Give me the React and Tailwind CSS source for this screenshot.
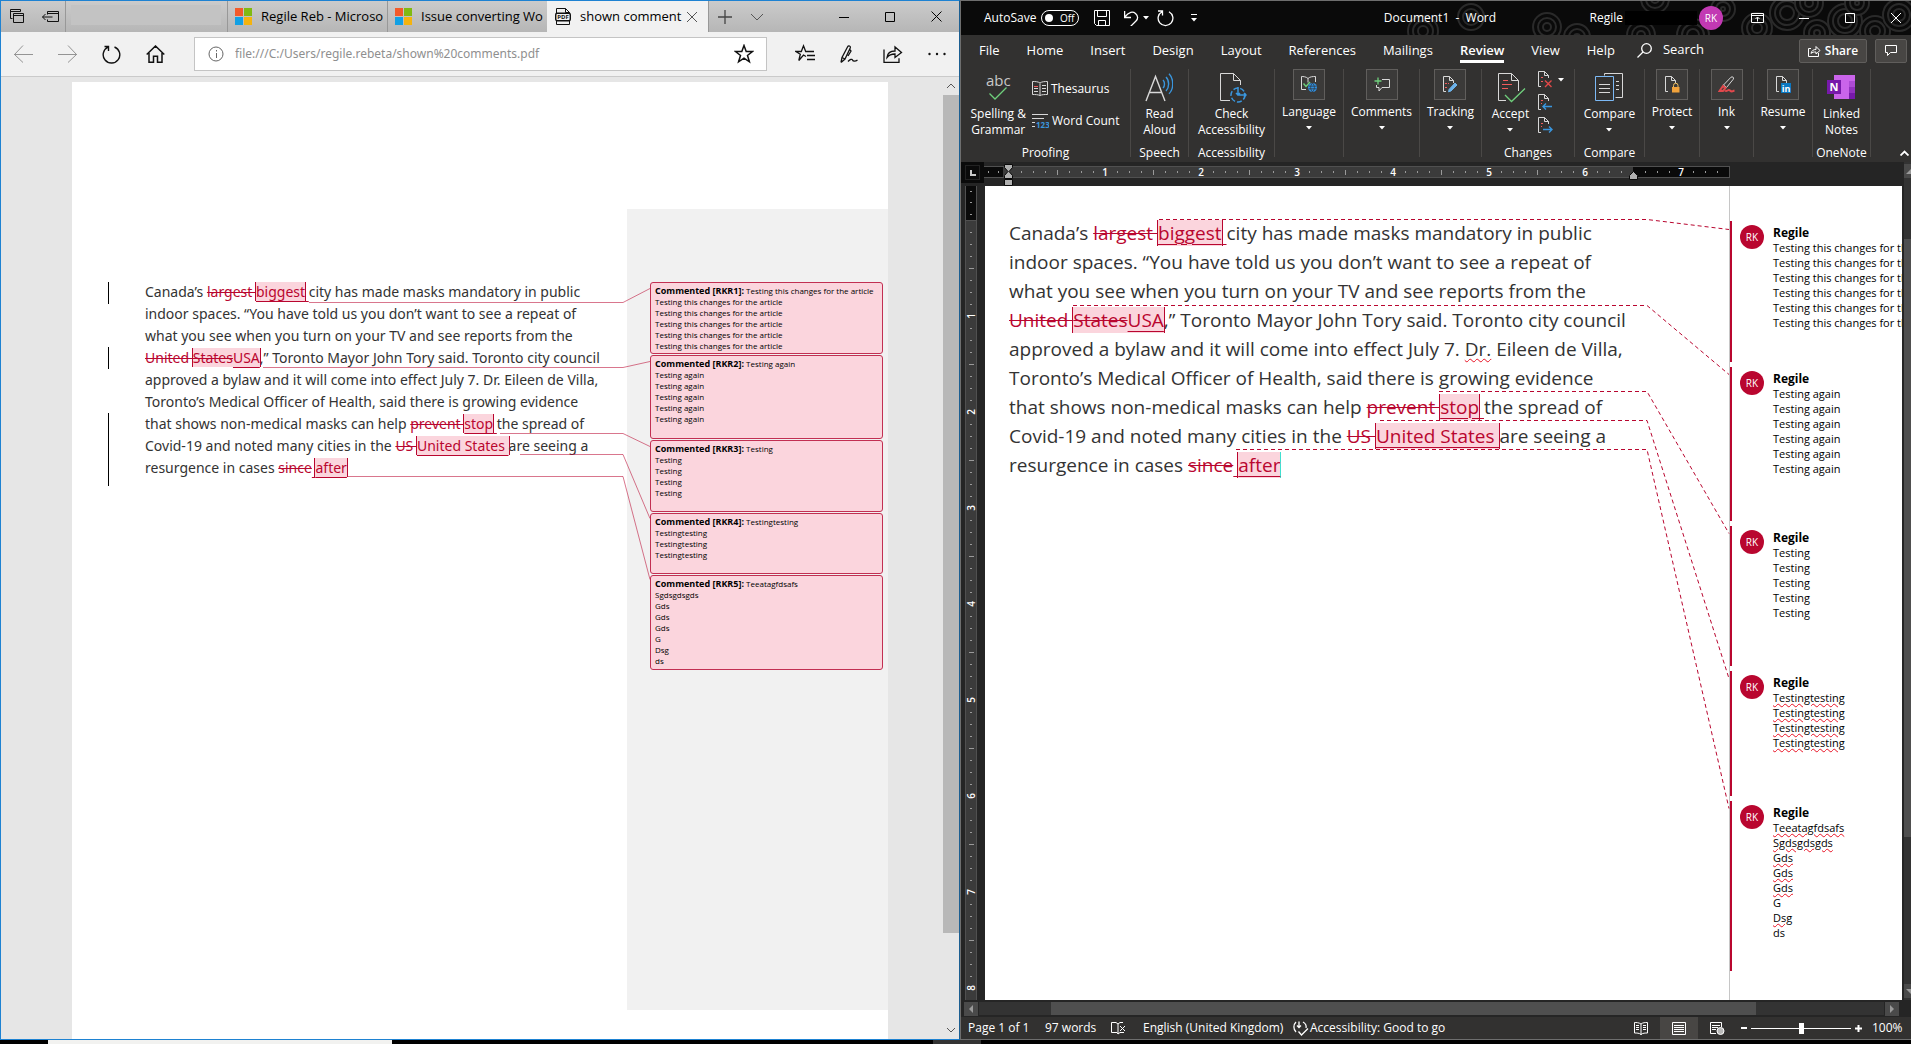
import React from "react";
import clsx from "clsx";

const articleLines = [
  <>
    Canada’s <Del>largest </Del>
    <Mark>
      <Ins>biggest</Ins>
    </Mark>
    <Ins> </Ins>city has made masks mandatory in public
  </>,
  <>indoor spaces. “You have told us you don’t want to see a repeat of</>,
  <>what you see when you turn on your TV and see reports from the</>,
  <>
    <Del>United </Del>
    <Mark>
      <Del>States</Del>
      <Ins>USA</Ins>
    </Mark>
    ,” Toronto Mayor John Tory said. Toronto city council
  </>,
  <>
    approved a bylaw and it will come into effect July 7.{" "}
    <span className="decoration-[#e81123] decoration-wavy decoration-1 underline-offset-2 group-data-[live=true]:underline">
      Dr.
    </span>{" "}
    Eileen de Villa,
  </>,
  <>Toronto’s Medical Officer of Health, said there is growing evidence</>,
  <>
    that shows non-medical masks can help <Del>prevent </Del>
    <Mark>
      <Ins>stop</Ins>
    </Mark>
    <Ins> </Ins>the spread of
  </>,
  <>
    Covid-19 and noted many cities in the <Del>US </Del>
    <Mark>
      <Ins>United States </Ins>
    </Mark>
    are seeing a
  </>,
  <>
    resurgence in cases <Del>since</Del>
    <Ins> </Ins>
    <Mark className="group-data-[live=true]:border-r-[#3fe0d0]">
      <Ins>after</Ins>
    </Mark>
  </>,
];

const pdfComments = [
  {
    id: "RKR1",
    first: "Testing this changes for the article",
    rest: Array(5).fill("Testing this changes for the article"),
    height: "min-h-[72px]",
  },
  {
    id: "RKR2",
    first: "Testing again",
    rest: Array(5).fill("Testing again"),
    height: "min-h-[84px]",
  },
  {
    id: "RKR3",
    first: "Testing",
    rest: Array(4).fill("Testing"),
    height: "min-h-[72px]",
  },
  {
    id: "RKR4",
    first: "Testingtesting",
    rest: Array(3).fill("Testingtesting"),
    height: "min-h-[61px]",
  },
  {
    id: "RKR5",
    first: "Teeatagfdsafs",
    rest: ["Sgdsgdsgds", "Gds", "Gds", "Gds", "G", "Dsg", "ds"],
    height: "min-h-[95px]",
  },
];

const wordComments = [
  {
    lines: Array(6).fill("Testing this changes for the article"),
    height: "min-h-[141px]",
  },
  { lines: Array(6).fill("Testing again"), height: "min-h-[154px]" },
  { lines: Array(5).fill("Testing"), height: "min-h-[140px]" },
  {
    lines: Array(4).fill("Testingtesting"),
    misspelled: true,
    height: "min-h-[125px]",
  },
  {
    lines: ["Teeatagfdsafs", "Sgdsgdsgds", "Gds", "Gds", "Gds", "G", "Dsg", "ds"],
    misspelled: true,
    height: "min-h-[170px]",
  },
];

const ribbonTabs = [
  "File",
  "Home",
  "Insert",
  "Design",
  "Layout",
  "References",
  "Mailings",
  "Review",
  "View",
  "Help",
];

// centre x, centre y and outer radius of each ring stack in the title bar
const rings = [
  [18, 30, 15],
  [66, 16, 13],
  [142, 26, 14],
  [172, 36, 13],
  [250, -2, 14],
  [236, 34, 14],
  [288, 34, 16],
  [318, 8, 12],
  [352, 27, 15],
  [382, 12, 17],
  [404, 2, 14],
  [412, 32, 13],
  [440, 20, 17],
  [452, 2, 12],
  [470, 30, 15],
  [494, 14, 16],
];

function Del({ children }) {
  return <del className="text-[#b9062f] decoration-1">{children}</del>;
}

function Ins({ children }) {
  return (
    <ins className="text-[#b9062f] decoration-1 underline-offset-4">
      {children}
    </ins>
  );
}

function Mark({ children, className }) {
  return (
    <mark className={clsx("-mx-px border-x border-[#b9062f] bg-[#fbd5dd]", className)}>
      {children}
    </mark>
  );
}

function Icon({ w = 16, h = w, children, className, ...rest }) {
  return (
    <svg
      width={w}
      height={h}
      viewBox={`0 0 ${w} ${h}`}
      fill="none"
      stroke="currentColor"
      className={clsx("shrink-0", className)}
      aria-hidden="true"
      {...rest}
    >
      {children}
    </svg>
  );
}

function Caret({ className }) {
  return (
    <Icon w={6} h={4} className={className}>
      <path d="M0 0h6L3 3.5z" fill="currentColor" stroke="none" />
    </Icon>
  );
}

/* ---------- Browser window ---------- */

function WindowsLogo() {
  return (
    <Icon w={17} stroke="none">
      <path fill="#f25a2a" d="M0 0h8v8H0z" />
      <path fill="#80ba12" d="M9 0h8v8H9z" />
      <path fill="#12a0e4" d="M0 9h8v8H0z" />
      <path fill="#f4b30e" d="M9 9h8v8H9z" />
    </Icon>
  );
}

function BrowserTabs() {
  return (
    <div className="flex h-[31px] bg-linear-to-b from-[#cbcbcb] to-[#b6b6b6] text-[13px]">
      <div className="flex w-[64px] flex-none items-center gap-[17px] pl-[9px]">
        <button aria-label="Tabs set aside">
          <Icon w={15} h={15} stroke="#111">
            <path d="M2.500 9.500h-2V.5h10v2" />
            <path d="M.5 2.500h10M3.500 4.500h10v9h-10zM3.500 6.500h10" />
          </Icon>
        </button>
        <button aria-label="Set these tabs aside">
          <Icon w={17} h={12} stroke="#111">
            <path d="M5.500 3.500v-3h11v10h-11v-2M5.500 2.500h11M.5 6h10M3.500 3L.5 6l3 3" />
          </Icon>
        </button>
      </div>
      <div className="w-[162px] flex-none border-l border-[#989898] p-1 pl-[5px]">
        <div className="h-5 w-[150px] bg-[#c3c3c3]" />
      </div>
      {["Regile Reb - Microso", "Issue converting Wo"].map((t) => (
        <button
          key={t}
          className="flex w-[160px] flex-none items-center gap-[9px] border-l border-[#989898] pl-[7px] whitespace-nowrap"
        >
          <WindowsLogo />
          {t}
        </button>
      ))}
      <div className="flex w-[162px] flex-none items-center border-r border-[#989898] bg-[#f1f1f1] pl-2">
        <Icon w={16} h={17} stroke="#111">
          <path d="M1.500 5V.5h9l4 4V5M1.500 13v3.500h13V13M10.500.5v4h4" />
          <rect x=".7" y="5.200" width="14.600" height="7.600" rx="1.500" strokeWidth="1.400" fill="#f1f1f1" />
          <text
            x="8"
            y="11.200"
            fontSize="6"
            fontWeight="700"
            textAnchor="middle"
            fill="#111"
            stroke="none"
          >
            PDF
          </text>
        </Icon>
        <button className="ml-[9px] text-left whitespace-nowrap">
          shown comment
        </button>
        <button aria-label="Close tab" className="mr-[10px] ml-auto">
          <Icon w={12} stroke="#555">
            <path d="M1 1l10 10M11 1L1 11" />
          </Icon>
        </button>
      </div>
      <div className="flex flex-1 items-center pl-[9px]">
        <button aria-label="New tab">
          <Icon w={14} stroke="#444">
            <path d="M7 0v14M0 7h14" strokeWidth="1.300" />
          </Icon>
        </button>
        <button aria-label="Show tab previews" className="ml-[18px]">
          <Icon w={14} h={8} stroke="#555">
            <path d="M1 1l6 6 6-6" />
          </Icon>
        </button>
        <div className="ml-auto flex items-center gap-9 pr-[17px] text-black">
          <button aria-label="Minimise">
            <Icon w={10}>
              <path d="M0 5.500h10" />
            </Icon>
          </button>
          <button aria-label="Maximise">
            <Icon w={10}>
              <path d="M.5.5h9v9h-9z" />
            </Icon>
          </button>
          <button aria-label="Close">
            <Icon w={11}>
              <path d="M.5.5l10 10M10.500.5l-10 10" />
            </Icon>
          </button>
        </div>
      </div>
    </div>
  );
}

function BrowserToolbar() {
  return (
    <div className="flex h-[45px] items-center border-b border-[#cacaca] bg-[#f1f1f1] pl-[13px] text-[#111]">
      <div className="flex w-[180px] items-center gap-[25px]">
        <button aria-label="Back">
          <Icon w={19} h={18} stroke="#949494">
            <path d="M0 9.500h19M9 .5L.5 9.500l8.500 8" />
          </Icon>
        </button>
        <button aria-label="Forward">
          <Icon w={19} h={18} stroke="#949494">
            <path d="M0 9.500h19M10 .5l8.500 9-8.500 8" />
          </Icon>
        </button>
        <button aria-label="Refresh">
          <Icon w={19} h={19} strokeWidth="1.400">
            <path d="M6 2.200a8.300 8.300 0 1 0 6.500-.2M2.500 1.500h4v4.500" />
          </Icon>
        </button>
        <button aria-label="Home">
          <Icon w={19} h={18} strokeWidth="1.500">
            <path d="M.7 9.500L9.500 1l8.800 8.500M3 8v9.200h4.500v-6h4v6H16V8" />
          </Icon>
        </button>
      </div>
      <div className="flex h-[34px] flex-1 items-center border border-[#c4c4c4] bg-white pr-3 pl-[13px]">
        <Icon w={16} stroke="#666">
          <circle cx="8" cy="8" r="7" />
          <path d="M8.500 7v5M8.500 4v1.500" />
        </Icon>
        <input
          aria-label="Address"
          className="mx-[11px] min-w-0 flex-1 font-['Noto_Sans',sans-serif] text-[12px] text-[#8f8f8f] outline-none"
          defaultValue="file:///C:/Users/regile.rebeta/shown%20comments.pdf"
        />
        <button aria-label="Add to favourites">
          <Icon w={20} h={20} strokeWidth="1.500">
            <path d="M10 1.500l2.200 6h6.300l-5 4 1.900 6.300L10 14.200l-5.400 3.600 1.900-6.300-5-4h6.300z" />
          </Icon>
        </button>
      </div>
      <div className="flex w-[192px] items-center gap-6 pl-[28px]">
        <button aria-label="Favourites hub">
          <Icon w={20} h={20} strokeWidth="1.300">
            <path d="M11 12.500L8.500 11l-4.700 5.500 1.500-6.300L.8 7.500h5.500L8.500 1.800l2.200 5.700H19M12 11.500h8M12 15.500h8" />
          </Icon>
        </button>
        <button aria-label="Add notes">
          <Icon w={20} h={20} strokeWidth="1.300">
            <path d="M2 18.500l1-5L8.500 3c1-2 3.500-1 2.700 1L6 15l-4 3.500M3 13.500l3 1.500M10.500 5l1.500 2-3 5M9 17.500c2-2 4-3 4.500-1.500s3 1.500 5 0" />
          </Icon>
        </button>
        <button aria-label="Share">
          <Icon w={20} h={20} strokeWidth="1.300">
            <path d="M1 5.500v12.800h15v-4M4 13.500c.5-4.500 3-6.500 8-6.500V3l6.500 5.500-6.500 5v-3.500c-4 0-6 1-8 3.500z" />
          </Icon>
        </button>
        <button aria-label="More">
          <Icon w={20} h={20} fill="currentColor" stroke="none">
            <circle cx="2.500" cy="10" r="1.200" />
            <circle cx="10" cy="10" r="1.200" />
            <circle cx="17.500" cy="10" r="1.200" />
          </Icon>
        </button>
      </div>
    </div>
  );
}

function PdfConnectors() {
  return (
    <svg className="pointer-events-none absolute inset-0 h-full w-full" fill="none">
      <g stroke="#b9062f" strokeOpacity=".55">
        <path d="M237 220.500h314l27-14" />
        <path d="M191 285.500h360l27-6" />
        <path d="M428 351.500h123l27 13" />
        <path d="M448 372.500h103l27 64" />
        <path d="M276 394.500h275l27 103" />
      </g>
      <path stroke="#000" d="M36.500 200v22M36.500 265v22M36.500 331v73" />
    </svg>
  );
}

function PdfViewer() {
  return (
    <div className="flex min-h-0 flex-1 bg-[#e6e6e6]">
      <div className="relative mt-[5px] ml-[71px] flex min-w-0 flex-1 bg-white">
        <div className="min-w-0 flex-1 pt-[199px] pl-[73px] font-['Noto_Sans','Open_Sans',sans-serif] text-[14px] leading-[22px] whitespace-pre text-[#333]">
          {articleLines.map((line, i) => (
            <p key={i}>{line}</p>
          ))}
        </div>
        <aside className="mt-[127px] mb-[29px] w-[261px] flex-none bg-[#f1f1f1] pt-[73px] pl-[23px]">
          <div className="flex w-[233px] flex-col gap-px">
            {pdfComments.map((c) => (
              <div
                key={c.id}
                className={clsx(
                  "rounded-[3px] border border-[#c22f52] bg-[#fbd5dd] pt-[2px] pl-1 text-[8px] leading-[11px] whitespace-nowrap text-black",
                  c.height
                )}
              >
                <p>
                  <b className="text-[9px]">Commented [{c.id}]:</b> {c.first}
                </p>
                {c.rest.map((t, i) => (
                  <p key={i}>{t}</p>
                ))}
              </div>
            ))}
          </div>
        </aside>
        <PdfConnectors />
      </div>
      <div className="ml-[55px] flex w-4 flex-none flex-col items-center justify-between text-[#555]">
        <Icon w={8} h={18}>
          <path d="M0 11l4-4 4 4" />
        </Icon>
        <div className="mb-[88px] w-full flex-1 bg-[#b8b8b8]" />
        <Icon w={8} h={18}>
          <path d="M0 7l4 4 4-4" />
        </Icon>
      </div>
    </div>
  );
}

function BrowserWindow() {
  return (
    <section className="flex min-w-0 flex-col border border-t-[#1e82d2] border-r-[#1c5f92] border-b-[#1e82d2] border-l-[#1e82d2] text-black">
      <BrowserTabs />
      <BrowserToolbar />
      <PdfViewer />
    </section>
  );
}

/* ---------- Word window ---------- */

function WordTitleBar() {
  return (
    <header className="relative grid h-[34px] grid-cols-[1fr_auto_1fr] items-center bg-[#0a0a0a] text-[12px] text-white">
      <svg className="absolute top-0 right-0 h-full w-[506px]" fill="none">
        {rings.map(([x, y, r]) => (
          <g key={`${x}-${y}`} stroke="#2a2a2a" strokeWidth="2">
            <circle cx={x} cy={y} r={r} fill="#0a0a0a" />
            <circle cx={x} cy={y} r={r - 5} />
            <circle cx={x} cy={y} r={Math.max(r - 10, 2)} />
          </g>
        ))}
      </svg>
      <div className="relative flex items-center pl-[23px]">
        <span id="autosave" className="w-[50px] whitespace-nowrap">
          AutoSave
        </span>
        <button
          role="switch"
          aria-checked="false"
          aria-labelledby="autosave"
          className="ml-[7px] flex h-4 w-[38px] items-center gap-[7px] rounded-full border border-white pl-[3px] text-[10px]"
        >
          <span className="h-2 w-2 rounded-full bg-white" />
          Off
        </button>
        <button aria-label="Save" className="ml-[15px]">
          <Icon w={16}>
            <path d="M.5.5h15v15H2.500l-2-2zM3.500.5v6h9v-6M4.500 15.500v-5h7v5" />
          </Icon>
        </button>
        <button aria-label="Undo" className="ml-[14px]">
          <Icon w={15} strokeWidth="1.300">
            <path d="M.6 0v6.500H7M.8 6C5 .5 9 .3 11.500 2.500c3 2.600 2.500 5.500.5 7.500l-5.500 5.500" />
          </Icon>
        </button>
        <Caret className="ml-1" />
        <button aria-label="Repeat" className="ml-2">
          <Icon w={17} strokeWidth="1.300">
            <path d="M5 1.700a7.400 7.400 0 1 0 7 0M1 1h4.500v4.500" />
          </Icon>
        </button>
        <button aria-label="Customise toolbar" className="ml-[17px]">
          <Icon w={6} h={8}>
            <path d="M0 .5h6" />
            <path d="M0 4h6L3 7.500z" fill="currentColor" stroke="none" />
          </Icon>
        </button>
      </div>
      <h1 className="relative pl-2 whitespace-pre">Document1  -  Word</h1>
      <div className="relative flex items-center justify-end pr-[10px]">
        <span>Regile</span>
        <span className="ml-[2px] h-[14px] w-[72px] bg-black" />
        <span className="ml-[2px] flex h-6 w-6 items-center justify-center rounded-full bg-[#c239b3] text-[10px]">
          RK
        </span>
        <button aria-label="Ribbon display options" className="ml-7">
          <Icon w={13} h={10}>
            <path d="M.5.5h12v9H.5zM.5 2.500h12M6.500 8.500v-4M4.500 6l2-2 2 2" />
          </Icon>
        </button>
        <button aria-label="Minimise" className="ml-[35px]">
          <Icon w={10}>
            <path d="M0 5.500h10" />
          </Icon>
        </button>
        <button aria-label="Maximise" className="ml-9">
          <Icon w={10}>
            <path d="M.5.5h9v9h-9z" />
          </Icon>
        </button>
        <button aria-label="Close" className="ml-9">
          <Icon w={10}>
            <path d="M0 0l10 10M10 0L0 10" />
          </Icon>
        </button>
      </div>
    </header>
  );
}

function RibbonTabs() {
  return (
    <nav className="flex h-[33px] items-center pl-[18px] text-[13px]">
      <div className="flex gap-[27px]">
        {ribbonTabs.map((t) => (
          <button
            key={t}
            className={clsx(
              "border-b-[3px] leading-[20px]",
              t === "Review" ? "border-white font-semibold" : "border-transparent"
            )}
          >
            {t}
          </button>
        ))}
      </div>
      <button className="ml-[22px] flex items-center gap-[11px] pb-[3px]">
        <Icon w={15} strokeWidth="1.300">
          <circle cx="9.500" cy="5.500" r="4.800" />
          <path d="M6 9L.5 14.500" />
        </Icon>
        Search
      </button>
      <div className="ml-auto flex gap-2 pr-1 pb-[2px]">
        <button className="flex h-6 w-[68px] items-center justify-center gap-1 rounded-[2px] border border-[#605e5c] bg-[#484644] text-[12px] font-semibold">
          <Icon w={13} h={12}>
            <path d="M3 3.500H.5v8h10V8M3 8.500c.5-3 2.500-4 5-4V1.500L12 5.500 8 9V7c-2 0-4 0-5 1.500z" />
          </Icon>
          Share
        </button>
        <button
          aria-label="Comments"
          className="flex h-6 w-8 items-center justify-center rounded-[2px] border border-[#605e5c] bg-[#484644]"
        >
          <Icon w={12} h={12}>
            <path d="M.5.5h11v7h-6l-3 3v-3h-2z" />
          </Icon>
        </button>
      </div>
    </nav>
  );
}

function Group({ width, label, children }) {
  return (
    <div
      className={clsx(
        "flex h-[88px] flex-none flex-col items-center border-r border-[#4a4846]",
        width
      )}
    >
      <div className="flex flex-1 justify-center">{children}</div>
      {label && <div className="-mb-1 leading-[16px]">{label}</div>}
    </div>
  );
}

function BigButton({ icon, lines, caret }) {
  return (
    <button className="flex flex-col items-center self-start pt-1">
      <span className="flex h-[33px] items-start">{icon}</span>
      {lines.map((l) => (
        <span key={l} className="leading-[16px] whitespace-nowrap">
          {l}
        </span>
      ))}
      {caret && <Caret className="mt-[6px]" />}
    </button>
  );
}

function BoxButton({ icon, label }) {
  return (
    <button className="flex flex-col items-center self-start">
      <span className="flex h-[31px] w-8 items-center justify-center border border-[#605e5c] bg-[#3b3a39]">
        {icon}
      </span>
      <span className="mt-1 leading-[16px]">{label}</span>
      <Caret className="mt-[6px]" />
    </button>
  );
}

function DocIcon({ children }) {
  return (
    <Icon w={16} h={17} stroke="#d8d8d8">
      <path d="M4 15.500H1.500V.5h6l4 4V7M7.500.5v4h4" />
      {children}
    </Icon>
  );
}

function Ribbon() {
  return (
    <div className="relative flex h-[94px] pt-px text-[12px]">
      <Group width="w-[170px]" label="Proofing">
        <div className="flex w-[160px] gap-[6px] pl-[5px]">
          <BigButton
            lines={["Spelling &", "Grammar"]}
            icon={
              <span className="flex flex-col items-center text-[15px] leading-[14px] text-[#c8c8c8]">
                abc
                <Icon w={18} h={13} stroke="#6fcf7c" strokeWidth="1.300">
                  <path d="M.5 6.500l5.500 5.500L17.500.5" />
                </Icon>
              </span>
            }
          />
          <div className="flex flex-col pt-2">
            <button className="flex h-[23px] items-center gap-[3px]">
              <Icon w={16} h={15} stroke="#d8d8d8">
                <path d="M8 2.500v12M8 2C6 .5 3 .5.500.5v13C3 13.500 6 13.500 8 14.500c2-1 5-1 7.500-1V.5C13 .5 10 .5 8 2zM10 4.500h4M10 7.500h4M10 10.500h4" />
                <path d="M2 7.500h4M2 10.500h4" />
                <path stroke="#f05c5c" d="M2 5.500h4" />
              </Icon>
              Thesaurus
            </button>
            <button className="mt-[9px] flex h-[23px] items-center gap-[3px]">
              <Icon w={17} h={14} stroke="#d8d8d8">
                <path d="M0 .5h16M0 4.500h12M0 8.500h3M0 12.500h3" />
                <text x="4" y="13.500" fontSize="8" fontWeight="700" fill="#3a96dd" stroke="none">
                  123
                </text>
              </Icon>
              Word Count
            </button>
          </div>
        </div>
      </Group>
      <Group width="w-[58px]" label="Speech">
        <BigButton
          lines={["Read", "Aloud"]}
          icon={
            <Icon w={28} h={29} strokeWidth="1.400" stroke="#d8d8d8">
              <path d="M1 28L10.500 3.500 20 28M4.500 19.500h12" />
              <path stroke="#3a96dd" d="M18 7c2 2 2 6 0 8M21 4c3.500 3.500 3.500 10.500 0 14M24 .8c5 5 5 15.200 0 20" />
            </Icon>
          }
        />
      </Group>
      <Group width="w-[86px]" label="Accessibility">
        <BigButton
          lines={["Check", "Accessibility"]}
          icon={
            <Icon w={27} h={31} stroke="#d8d8d8" className="-mr-1">
              <path d="M10 27.500H.5V.5h13l7 7V12M13.500.5v7h7" />
              <circle cx="18" cy="22" r="7" stroke="#3a96dd" strokeWidth="1.500" strokeDasharray="5 2" />
              <path stroke="#3a96dd" strokeWidth="1.500" d="M18 14v8h8M16 20l2 2 2-2M24 20l2 2-2 2" />
            </Icon>
          }
        />
      </Group>
      <Group width="w-[69px]">
        <BoxButton
          label="Language"
          icon={
            <Icon w={18} h={17} stroke="#d8d8d8">
              <path d="M8 2.500C6 .5 3 .5 1.500.5v13H6M8 2.500v4M8 2.500C10 .5 13 .5 15.500.5V6" />
              <path stroke="#6fcf7c" strokeWidth="1.400" d="M3.500 7.500l2.500 3 4-4.500" />
              <circle cx="12.500" cy="11.500" r="4.500" fill="#2f8fe0" stroke="none" />
              <path stroke="#323130" strokeWidth=".7" d="M8.500 10.200h8M8.500 12.800h8M12.500 7c-2.500 3-2.500 6 0 9M12.500 7c2.500 3 2.500 6 0 9" />
            </Icon>
          }
        />
      </Group>
      <Group width="w-[76px]">
        <BoxButton
          label="Comments"
          icon={
            <Icon w={16} h={16} stroke="#d8d8d8">
              <path d="M8 2.500h7.500v8H8l-3 3.500v-3.500H2.500V8" />
              <path stroke="#6fcf7c" strokeWidth="1.300" d="M4 .5v7M.5 4h7" />
            </Icon>
          }
        />
      </Group>
      <Group width="w-[62px]">
        <BoxButton
          label="Tracking"
          icon={
            <DocIcon>
              <path stroke="#f05c5c" d="M3 7.500h2M6 7.500h1M3 11.500h2" />
              <path fill="#6cb2ea" stroke="#6cb2ea" d="M13 7l2 2-6 6-2.500.8.7-2.500z" />
            </DocIcon>
          }
        />
      </Group>
      <Group width="w-[93px]" label="Changes">
        <BigButton
          caret
          lines={["Accept"]}
          icon={
            <Icon w={28} h={30} stroke="#d8d8d8" className="-mr-1">
              <path d="M8 27.500H.5V.5h13l7 7V18M13.500.5v7h7" />
              <path stroke="#f05c5c" d="M5 7.500h5M4 11.500h8M8 11.500h6M4 15.500h6" />
              <path stroke="#6fcf7c" strokeWidth="1.300" d="M7 22l6.500 6.500L27 15.500" />
            </Icon>
          }
        />
        <div className="ml-2 flex flex-col gap-[6px] pt-[2px]">
          <button aria-label="Reject" className="flex items-center gap-[5px]">
            <DocIcon>
              <path stroke="#f05c5c" d="M4 6.500h2M4 10.500h2" />
              <path stroke="#e04848" strokeWidth="1.400" d="M8 9.500l6.500 6.500M14.500 9.500L8 16" />
            </DocIcon>
            <Caret />
          </button>
          <button aria-label="Previous change">
            <DocIcon>
              <path stroke="#f05c5c" d="M4 6.500h2M4 9.500h1" />
              <path stroke="#3a96dd" strokeWidth="1.400" d="M6 12.500h9M9 9.500l-3 3 3 3" />
            </DocIcon>
          </button>
          <button aria-label="Next change">
            <DocIcon>
              <path stroke="#f05c5c" d="M4 6.500h2M4 9.500h1" />
              <path stroke="#3a96dd" strokeWidth="1.400" d="M6 12.500h9M12 9.500l3 3-3 3" />
            </DocIcon>
          </button>
        </div>
      </Group>
      <Group width="w-[70px]" label="Compare">
        <BigButton
          caret
          lines={["Compare"]}
          icon={
            <Icon w={28} h={29} stroke="#d8d8d8">
              <path d="M9.500 2.500v-2h18v24h-7M21 8.500h3M21 12.500h3M21 16.500h3" />
              <path stroke="#7cb9f5" d="M.5 3.500h18v24H.5z" />
              <path d="M4 11.500h11M4 15.500h11M4 19.500h11" />
            </Icon>
          }
        />
      </Group>
      <Group width="w-[55px]">
        <BoxButton
          label="Protect"
          icon={
            <DocIcon>
              <rect x="8" y="11" width="7.500" height="5.500" fill="#f2a33c" stroke="none" />
              <path stroke="#f2c060" d="M9.500 11V9.500a2 2 0 0 1 4.500 0V11" />
            </DocIcon>
          }
        />
      </Group>
      <Group width="w-[54px]">
        <BoxButton
          label="Ink"
          icon={
            <Icon w={17} h={17} stroke="#d8d8d8">
              <path d="M5.500 9L13 1.200c1.500-1 3.300.3 2.300 2L8.500 11.500z" />
              <path
                stroke="#e0484c"
                strokeWidth="2"
                d="M5 10l2.500 2-2.500 3H1.500zM7 14.500c2 2 3-2 5 0s2.500.5 4.500 0"
              />
            </Icon>
          }
        />
      </Group>
      <Group width="w-[59px]">
        <BoxButton
          label="Resume"
          icon={
            <DocIcon>
              <rect x="6" y="7" width="10" height="10" fill="#0a78c2" stroke="none" />
              <text x="11" y="15.500" fontSize="9" fontWeight="700" textAnchor="middle" fill="#fff" stroke="none">
                in
              </text>
            </DocIcon>
          }
        />
      </Group>
      <Group width="w-[58px]" label="OneNote">
        <BigButton
          lines={["Linked", "Notes"]}
          icon={
            <Icon w={28} h={29} stroke="none">
              <path fill="#ca64ea" d="M7 2h21v24H7z" />
              <path fill="#ae4bd5" d="M22 8h6v6h-6z" />
              <path fill="#9332bf" d="M22 14h6v6h-6z" />
              <path fill="#7719aa" d="M22 20h6v6h-6zM0 7h14v14H0z" />
              <text x="7" y="18" fontSize="11" fontWeight="700" textAnchor="middle" fill="#fff">
                N
              </text>
            </Icon>
          }
        />
      </Group>
      <button aria-label="Collapse ribbon" className="mr-[2px] mb-[6px] ml-auto self-end">
        <Icon w={9} h={6} strokeWidth="1.800">
          <path d="M.5 5.500l4-4 4 4" />
        </Icon>
      </button>
    </div>
  );
}

function Tick({ i, vertical }) {
  const inch = i % 8 === 0 && i > 0;
  const half = i % 8 === 4;
  if (inch)
    return (
      <span
        className={clsx(
          "text-[10px] leading-[12px] font-semibold text-white",
          vertical && "rotate-180 [writing-mode:vertical-rl]"
        )}
      >
        {i / 8}
      </span>
    );
  if (i === 0) return null;
  return (
    <span
      className={clsx(
        "bg-[#9a9a9a]",
        vertical && (half ? "h-px w-[5px]" : "h-px w-[2px]"),
        !vertical && (half ? "h-[5px] w-px" : "h-[2px] w-px")
      )}
    />
  );
}

function HorizontalRuler() {
  return (
    <div className="flex h-6 items-start bg-[#252525]">
      <div className="flex h-[21px] w-[23px] items-center justify-center bg-[#0a0a0a]">
        <span className="flex h-[15px] w-[15px] items-center justify-center border border-[#222]">
          <span className="h-[6px] w-[6px] border-b-2 border-l-2 border-[#c8c8c8]" />
        </span>
      </div>
      <div className="relative mt-1 flex h-[12px] w-[746px] border-y border-r border-[#505050] bg-[#0a0a0a]">
        <div className="flex w-[19px] items-center justify-around">
          <Tick i={1} />
          <Tick i={1} />
        </div>
        <div className="flex w-[630px] items-center bg-[#3b3b3b]">
          {Array.from({ length: 52 }, (_, i) => (
            <span key={i} className="flex w-3 flex-none items-center justify-center">
              <Tick i={i} />
            </span>
          ))}
        </div>
        <div className="flex flex-1 items-center pl-[6px]">
          {Array.from({ length: 7 }, (_, i) => (
            <span key={i} className="flex w-3 flex-none items-center justify-center">
              <Tick i={i + 53} />
            </span>
          ))}
        </div>
        <Icon w={9} h={22} fill="#b0b0b0" stroke="#0a0a0a" className="absolute -top-[3px] left-5">
          <path d="M.5.5h8v3L5 7.500l3.500 4v3h-8v-3L4 7.500.5 3.500zM.5 15.500h8v6h-8z" />
        </Icon>
        <Icon w={9} h={9} fill="#b0b0b0" stroke="#0a0a0a" className="absolute top-[4px] right-[91px]">
          <path d="M.5 8.500v-4l4-4 4 4v4z" />
        </Icon>
      </div>
    </div>
  );
}

function VerticalRuler() {
  return (
    <div className="flex w-6 flex-none flex-col overflow-hidden bg-[#252525] pl-1">
      <div className="flex h-[34px] w-3 flex-none flex-col items-center justify-around border-x border-[#505050] bg-[#0a0a0a]">
        <Tick i={1} vertical />
        <Tick i={1} vertical />
        <Tick i={1} vertical />
      </div>
      <div className="w-3 flex-1 overflow-hidden border-x border-t border-[#505050] bg-[#3b3b3b]">
        <div className="-mt-[7px]">
          {Array.from({ length: 66 }, (_, i) => (
            <span key={i} className="flex h-3 w-full items-center justify-center">
              <Tick i={i} vertical />
            </span>
          ))}
        </div>
      </div>
    </div>
  );
}

function WordConnectors() {
  return (
    <svg
      className="pointer-events-none absolute inset-0 h-full w-full"
      fill="none"
      stroke="#b9062f"
      strokeDasharray="4 3"
    >
      <path d="M174 33.500h488l82 10" />
      <path d="M88 119.500h574l82 69" />
      <path d="M454 205.500h208l82 142" />
      <path d="M395 234.500h267l82 258" />
      <path d="M251 263.500h411l82 359" />
    </svg>
  );
}

function WordComment({ comment }) {
  return (
    <article
      className={clsx("flex border-l-[3px] border-[#b9062f] pt-1", comment.height)}
    >
      <span className="ml-2 flex h-6 w-6 flex-none items-center justify-center rounded-full bg-[#b9062f] text-[10px] text-white">
        RK
      </span>
      <div className="ml-[9px] text-[11px] leading-[15px] whitespace-nowrap">
        <h3 className="text-[12px] font-bold">Regile</h3>
        {comment.lines.map((t, i) => (
          <p key={i}>
            <span
              className={clsx(
                comment.misspelled &&
                  t.length > 2 &&
                  "underline decoration-[#e81123] decoration-wavy decoration-1 underline-offset-1"
              )}
            >
              {t}
            </span>
          </p>
        ))}
      </div>
    </article>
  );
}

function WordPage() {
  return (
    <main className="relative flex min-w-0 flex-1 overflow-hidden bg-white text-black">
      <div
        data-live="true"
        className="group flex-1 pt-[33px] pl-6 text-[19px] leading-[29px] whitespace-pre text-[#333]"
      >
        {articleLines.map((line, i) => (
          <p key={i}>{line}</p>
        ))}
      </div>
      <aside className="w-[173px] flex-none overflow-hidden border-l border-[#c6c6c6]">
        <div className="-ml-px flex flex-col gap-[5px] pt-[35px]">
          {wordComments.map((c, i) => (
            <WordComment key={i} comment={c} />
          ))}
        </div>
      </aside>
      <WordConnectors />
    </main>
  );
}

function HorizontalScroll() {
  return (
    <div className="flex h-[17px] items-center gap-px bg-[#252525] px-[3px] text-[#9a9a9a]">
      <button aria-label="Scroll left" className="flex h-[14px] w-[14px] items-center justify-center bg-[#4a4a4a]">
        <Icon w={4} h={8} fill="currentColor" stroke="none">
          <path d="M4 0v8L0 4z" />
        </Icon>
      </button>
      <div className="h-[13px] flex-1 bg-[#333] pr-[128px] pl-[72px]">
        <div className="h-full bg-[#4f4f4f]" />
      </div>
      <button aria-label="Scroll right" className="mr-[9px] flex h-[14px] w-[14px] items-center justify-center bg-[#4a4a4a]">
        <Icon w={4} h={8} fill="currentColor" stroke="none">
          <path d="M0 0v8l4-4z" />
        </Icon>
      </button>
    </div>
  );
}

function StatusBar() {
  return (
    <footer className="flex h-[22px] items-center pl-[7px] text-[12px] whitespace-nowrap">
      <span className="w-[77px]">Page 1 of 1</span>
      <span className="w-[66px]">97 words</span>
      <Icon w={15} h={14}>
        <path d="M7 3v10M7 13l-1-1.500H.5V1.500H5l2 1.500 2-1.500h3M9 5l5 5M14 5l-5 5M7 13l2-1.500h4" />
      </Icon>
      <span className="ml-[17px] w-[149px]">English (United Kingdom)</span>
      <Icon w={17} h={16} strokeWidth="1.300">
        <path d="M4 2a7 7 0 0 0 0 10M7 1.500v6M5 5.500l2 2 2-2M11 2c2.500 1.500 3.500 4 3 6M6.500 11.500l3 3.500L16 8.500" />
      </Icon>
      <span className="ml-px">Accessibility: Good to go</span>
      <div className="ml-auto flex h-full items-center">
        <button aria-label="Read mode">
          <Icon w={14} h={13}>
            <path d="M7 2v11M7 2C5 .5 2 .5.500.5v10.500c2 0 5 0 6.500 1.500 1.500-1.500 4.500-1.500 6.500-1.500V.5C11 .5 9 .5 7 2zM2 3.500h3M2 5.500h3M2 7.500h3M9 3.500h3M9 5.500h3M9 7.500h3" />
          </Icon>
        </button>
        <button
          aria-label="Print layout"
          className="ml-3 flex h-full w-[38px] items-center justify-center bg-[#484644]"
        >
          <Icon w={14} h={13}>
            <path d="M.5.5h13v12H.5zM2 3.500h10M2 5.500h10M2 7.500h10M2 9.500h10" />
          </Icon>
        </button>
        <button aria-label="Web layout" className="ml-3">
          <Icon w={15} h={13}>
            <path d="M6 11.500H.5V.5h11V5M2 3.500h8M2 5.500h6M2 7.500h4" />
            <circle cx="10.500" cy="9" r="3.500" fill="#b8b8b8" />
          </Icon>
        </button>
        <button aria-label="Zoom out" className="ml-4">
          <Icon w={6} h={6} strokeWidth="2">
            <path d="M0 3h6" />
          </Icon>
        </button>
        <input
          type="range"
          aria-label="Zoom"
          min="0"
          max="100"
          defaultValue="50"
          className="mx-1 h-px w-[100px] appearance-none bg-white [&::-webkit-slider-thumb]:h-[11px] [&::-webkit-slider-thumb]:w-[5px] [&::-webkit-slider-thumb]:appearance-none [&::-webkit-slider-thumb]:bg-white"
        />
        <button aria-label="Zoom in">
          <Icon w={7} h={7} strokeWidth="2">
            <path d="M0 3.500h7M3.500 0v7" />
          </Icon>
        </button>
        <span className="ml-[10px] w-[39px]">100%</span>
      </div>
    </footer>
  );
}

function WordWindow() {
  return (
    <section className="flex min-w-0 flex-col overflow-hidden border border-r-0 border-[#6e6e6e] bg-[#323130] text-white">
      <WordTitleBar />
      <RibbonTabs />
      <Ribbon />
      <div className="flex min-h-0 flex-1">
        <div className="flex min-w-0 flex-1 flex-col">
          <HorizontalRuler />
          <div className="flex min-h-0 flex-1">
            <VerticalRuler />
            <WordPage />
          </div>
        </div>
        <div className="flex w-[9px] flex-col border-l-2 border-[#252525] bg-[#333] pt-[2px] text-[#9a9a9a]">
          <span className="flex h-[14px] items-center bg-[#4a4a4a] pl-[2px]">
            <Icon w={5} h={5} fill="currentColor" stroke="none">
              <path d="M0 5l5-5v5z" />
            </Icon>
          </span>
          <div className="mt-[61px] mb-[147px] flex-1 bg-[#4f4f4f]" />
          <span className="mb-[2px] flex h-[14px] items-center bg-[#4a4a4a] pl-[2px]">
            <Icon w={5} h={5} fill="currentColor" stroke="none">
              <path d="M0 0l5 5V0z" />
            </Icon>
          </span>
        </div>
      </div>
      <HorizontalScroll />
      <StatusBar />
    </section>
  );
}

export default function App() {
  return (
    <div className="flex h-screen flex-col overflow-hidden bg-black font-['Open_Sans','Noto_Sans',sans-serif]">
      <div className="grid min-h-0 flex-1 grid-cols-[960fr_951fr] grid-rows-[minmax(0,1fr)]">
        <BrowserWindow />
        <WordWindow />
      </div>
      <div className="flex h-1 pl-12">
        <div className="w-[344px] bg-[#f2f2f0]" />
        <div className="ml-[541px] w-12 bg-[#333]" />
      </div>
    </div>
  );
}
